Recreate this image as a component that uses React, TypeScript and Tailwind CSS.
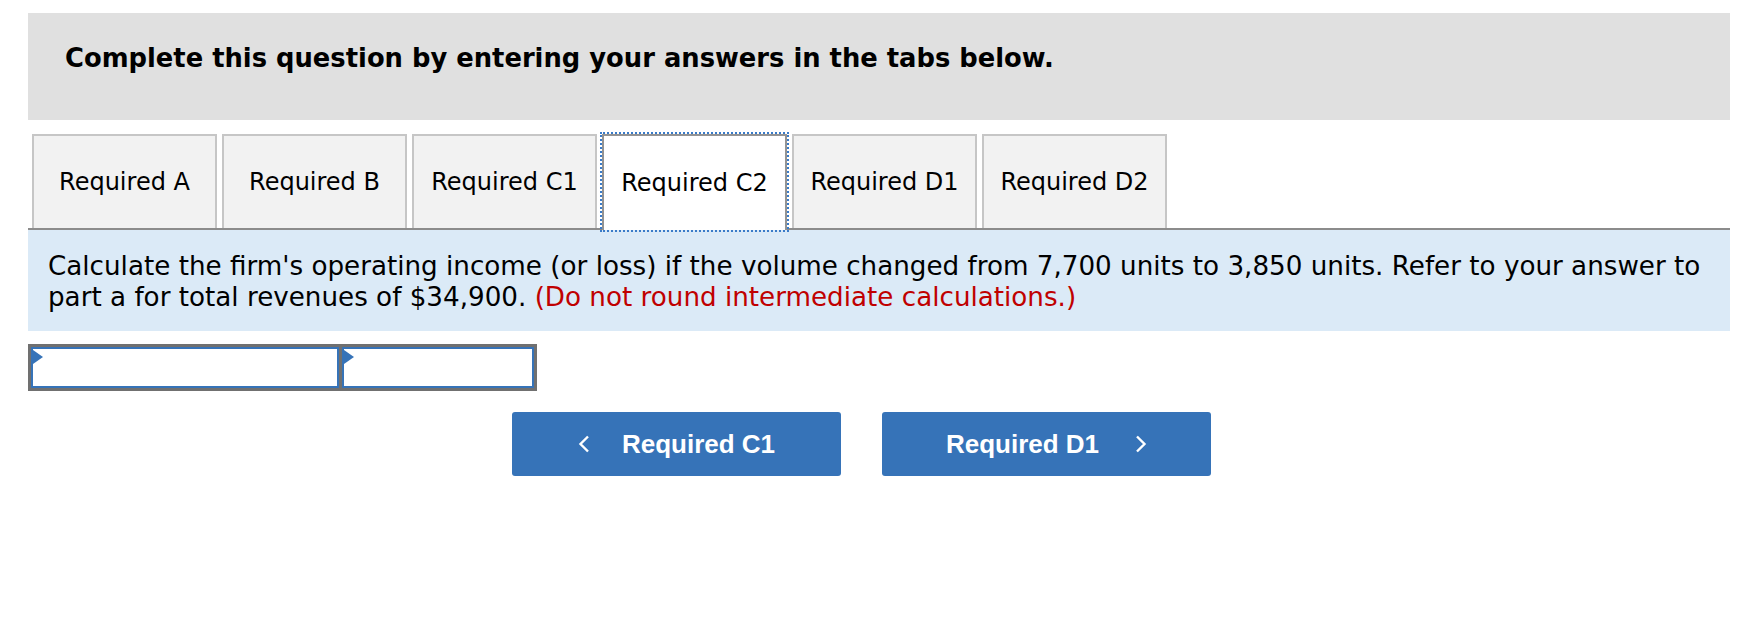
import React from "react";

const tabs = ["Required A", "Required B", "Required C1", "Required C2", "Required D1", "Required D2"];

function Chevron({ dir }: { dir: "left" | "right" }) {
    return (
        <svg width="12" height="18" viewBox="0 0 12 18" fill="none">
            {dir === "left"
                ? <path d="M10 1.5 L2.5 9 L10 16.5" stroke="white" strokeWidth="2.4" />
                : <path d="M2 1.5 L9.5 9 L2 16.5" stroke="white" strokeWidth="2.4" />
            }
        </svg>
    );
}

function AnswerCell({ width }: { width: string }) {
    return (
        <div className={"relative h-full border-[2.5px] border-[#3673b8] bg-white " + width}>
            <div className="absolute left-0 top-[1px] w-0 h-0 border-y-[7px] border-y-transparent border-l-[10px] border-l-[#3673b8]"></div>
        </div>
    );
}

export default function App() {
    return (
        <div className="w-[1760px] h-[624px] bg-white pt-[13px] px-[28px] font-['DejaVu_Sans',Verdana,sans-serif] text-black">
            <div className="w-[1702px]">
                <div className="bg-[#e0e0e0] h-[107px] pl-[37px] pt-[30px]">
                    <div className="font-bold text-[25.8px] leading-[30px]">Complete this question by entering your answers in the tabs below.</div>
                </div>

                <div className="mt-[14px] pl-[4px] flex gap-[5px] border-b-2 border-[#8c8c8c] h-[96px]">
                    {tabs.map((tab) => (
                        tab === "Required C2"
                            ? <div key={tab} className="w-[185px] h-[96px] bg-white border-2 border-b-0 border-[#939393] outline-2 outline-dotted outline-[#3a7bc8] flex items-center justify-center text-[24px] relative z-10">
                                {tab}
                            </div>
                            : <div key={tab} className="w-[185px] h-[94px] bg-[#f2f2f2] border-2 border-b-0 border-[#c6c6c6] flex items-center justify-center text-[24px]">
                                {tab}
                            </div>
                    ))}
                </div>

                <div className="bg-[#dbeaf7] pl-[20px] pr-[20px] pt-[21px] pb-[18px] text-[26.2px] leading-[31px]">
                    <p>
                        Calculate the firm's operating income (or loss) if the volume changed from 7,700 units to 3,850 units. Refer to your answer to part a for total revenues of $34,900. <span className="text-[#c00000]">(Do not round intermediate calculations.)</span>
                    </p>
                </div>

                <div className="mt-[13px] flex w-[509px] h-[47px] border-[3px] border-[#707070] bg-[#707070] gap-[3px]">
                    <AnswerCell width="w-[308px]" />
                    <AnswerCell width="w-[192px]" />
                </div>

                <div className="mt-[21px] ml-[484px] flex gap-[41px] font-['Liberation_Sans',Arial,sans-serif] font-bold text-white text-[26px]">
                    <button className="w-[329px] h-[64px] rounded-[3px] bg-[#3673b8] flex items-center justify-center gap-[32px]">
                        <Chevron dir="left" />
                        <span>Required C1</span>
                    </button>
                    <button className="w-[329px] h-[64px] rounded-[3px] bg-[#3673b8] flex items-center justify-center gap-[36px]">
                        <span>Required D1</span>
                        <Chevron dir="right" />
                    </button>
                </div>
            </div>
        </div>
    );
}
